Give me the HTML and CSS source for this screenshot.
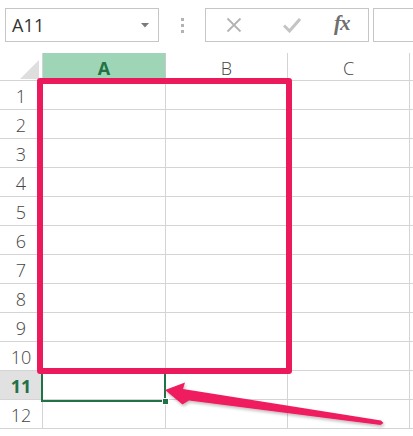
FILE: index.html
```html
<!DOCTYPE html>
<html>
<head>
<meta charset="utf-8">
<link rel="stylesheet" href="styles.css">
</head>
<body>
<div class="page">
  <div class="toolbar">
    <div class="namebox">
      <span class="name">A11</span>
      <svg class="drop" width="8" height="5" viewBox="0 0 8 5"><polygon points="0,0 8,0 4,4.5" fill="#7a7a7a"/></svg>
    </div>
    <div class="dots"><span></span><span></span><span></span></div>
    <div class="fbuttons">
      <svg class="ico" width="16" height="16" viewBox="0 0 16 16"><path d="M1.5 1.5 L14.5 14.5 M14.5 1.5 L1.5 14.5" stroke="#b3b3b3" stroke-width="1.8" fill="none"/></svg>
      <svg class="ico" width="18" height="16" viewBox="0 0 18 16"><path d="M1 8.5 L6.5 14 L17 2" stroke="#c4c4c4" stroke-width="3" fill="none"/></svg>
      <span class="fx">fx</span>
    </div>
    <div class="finput"></div>
  </div>
  <div class="sheet">
    <div class="grid">
      <div class="corner"><svg width="22" height="20" viewBox="0 0 22 20"><polygon points="20,0 20,19 1,19" fill="#dedede"/></svg></div>
      <div class="ch sel">A</div>
      <div class="ch">B</div>
      <div class="ch">C</div>
      <div class="ch last"></div>

      <div class="rh">1</div><div class="c"></div><div class="c"></div><div class="c"></div><div class="c last"></div>
      <div class="rh">2</div><div class="c"></div><div class="c"></div><div class="c"></div><div class="c last"></div>
      <div class="rh">3</div><div class="c"></div><div class="c"></div><div class="c"></div><div class="c last"></div>
      <div class="rh">4</div><div class="c"></div><div class="c"></div><div class="c"></div><div class="c last"></div>
      <div class="rh">5</div><div class="c"></div><div class="c"></div><div class="c"></div><div class="c last"></div>
      <div class="rh">6</div><div class="c"></div><div class="c"></div><div class="c"></div><div class="c last"></div>
      <div class="rh">7</div><div class="c"></div><div class="c"></div><div class="c"></div><div class="c last"></div>
      <div class="rh">8</div><div class="c"></div><div class="c"></div><div class="c"></div><div class="c last"></div>
      <div class="rh">9</div><div class="c"></div><div class="c"></div><div class="c"></div><div class="c last"></div>
      <div class="rh">10</div><div class="c"></div><div class="c"></div><div class="c"></div><div class="c last"></div>
      <div class="rh sel">11</div><div class="c"></div><div class="c"></div><div class="c"></div><div class="c last"></div>
      <div class="rh">12</div><div class="c"></div><div class="c"></div><div class="c"></div><div class="c last"></div>
    </div>
    <div class="selection"><span class="handle"></span></div>
    <div class="highlight"></div>
    <svg class="arrow" width="413" height="436" viewBox="0 0 413 436">
      <defs>
        <filter id="sh" x="-10%" y="-50%" width="130%" height="200%">
          <feDropShadow dx="1" dy="2" stdDeviation="1.5" flood-color="#000" flood-opacity="0.25"/>
        </filter>
      </defs>
      <polygon filter="url(#sh)" points="165,390 185,382.5 183,389 381,420.5 383.5,423 380.5,425 189,400.5 182.5,404.5" fill="#ef1c60"/>
    </svg>
  </div>
</div>
</body>
</html>
```
FILE: styles.css
```css
* { box-sizing: border-box; }
html, body { margin: 0; padding: 0; background: #ffffff; }
body { font-family: "Open Sans", "Noto Sans", "Liberation Sans", sans-serif; color: #444; }
.page { position: relative; width: 413px; height: 436px; overflow: hidden; }

.toolbar { display: flex; align-items: center; height: 53px; padding: 8px 0 11px 5px; }
.namebox { width: 154px; height: 34px; border: 1px solid #c6c6c6; display: flex; align-items: center; justify-content: space-between; padding: 0 9px 0 6px; }
.name { font-size: 18px; color: #333; letter-spacing: 0.2px; }
.drop { display: block; margin-top: 1px; }
.dots { width: 46px; display: flex; flex-direction: column; align-items: center; gap: 3px; }
.dots span { width: 3px; height: 3px; background: #b3b3b3; display: block; }
.fbuttons { width: 164px; height: 34px; border: 1px solid #c6c6c6; display: flex; align-items: center; padding-left: 20px; }
.fbuttons .ico { display: block; }
.fbuttons .ico:first-child { margin-right: 41px; }
.fbuttons .ico:nth-child(2) { margin-right: 33px; }
.fx { font-family: "Liberation Serif", "DejaVu Serif", serif; font-style: italic; font-weight: bold; font-size: 21px; color: #6e6e6e; letter-spacing: -1px; margin-top: -3px; }
.finput { flex: 1; height: 34px; border: 1px solid #c6c6c6; border-right: none; margin-left: 4px; }

.sheet { position: absolute; left: 0; top: 53px; width: 413px; height: 383px; }
.grid { display: grid; grid-template-columns: 43px 123px 122px 122px 1fr; grid-template-rows: 28px repeat(12, 29px); }
.grid > div { border-right: 1px solid #d4d4d4; border-bottom: 1px solid #d4d4d4; }
.grid > .last { border-right: none; }
.corner { display: flex; align-items: flex-end; justify-content: flex-end; padding: 0 1px 0 0; }
.corner svg { display: block; }
.ch { font-size: 18px; font-weight: 300; color: #444; display: flex; align-items: center; justify-content: center; padding-top: 2px; }
.ch.sel { background: #9fd5b7; color: #217346; font-weight: 700; border-right-color: #c8c8c8; }
.rh { font-size: 18px; font-weight: 300; color: #444; display: flex; align-items: center; justify-content: center; padding-top: 1px; }
.rh.sel { background: #e1e1e1; color: #217346; font-weight: 700; }

.selection { position: absolute; left: 41px; top: 318px; width: 125px; height: 31px; border: 2px solid #217346; }
.handle { position: absolute; right: -5px; bottom: -5px; width: 7px; height: 7px; background: #217346; border: 1px solid #ffffff; }
.highlight { position: absolute; left: 37px; top: 25px; width: 255px; height: 296px; border: 6px solid #ea1a5c; border-radius: 3px; }
.arrow { position: absolute; left: 0; top: -53px; pointer-events: none; }
```
